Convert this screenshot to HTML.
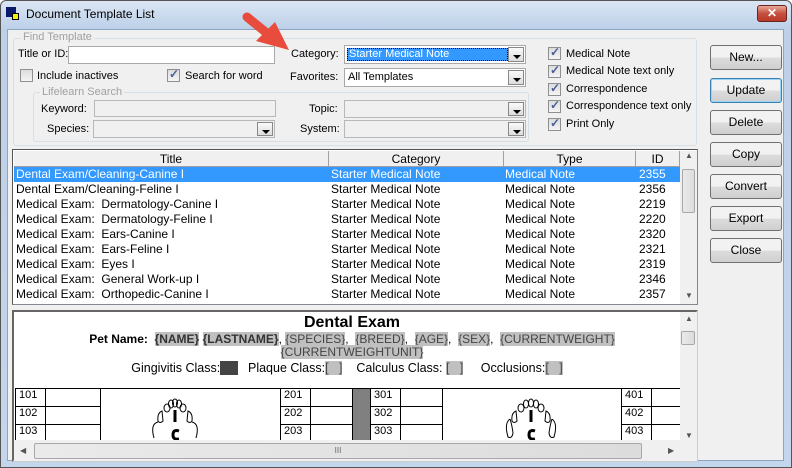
<!DOCTYPE html>
<html><head><meta charset="utf-8"><style>
*{box-sizing:border-box;margin:0;padding:0}
body{width:792px;height:468px;overflow:hidden;background:#fff;font-family:"Liberation Sans",sans-serif;font-size:11px;color:#000;position:relative}
.a{position:absolute;white-space:nowrap}
.win{left:0;top:0;width:792px;height:468px;background:linear-gradient(#dbe6f4,#bcd0e8 28px,#c4d6ec);border:1px solid #555;border-radius:6px 6px 0 0}
.body{left:7px;top:29px;width:777px;height:432px;background:#f0f0f0;border:1px solid #8ea4c0}
.grp{border:1px solid #d5dfe5;border-radius:3px}
.gl{background:#f0f0f0;color:#a0a0a0;padding:0 2px;font-size:11px}
.inp{background:#fff;border:1px solid #a9a9a9}
.dis{background:#f0f0f0;border:1px solid #b8b8b8}
.dd{position:absolute;right:1px;top:1px;width:16px;bottom:1px;background:linear-gradient(#fafafa,#dcdcdc);border:1px solid #888}
.dd:after{content:"";position:absolute;left:4px;top:7px;border-left:4px solid transparent;border-right:4px solid transparent;border-top:4px solid #000}
.cb{width:13px;height:13px;border:1px solid #8e8f8f;background:linear-gradient(#dcdcdc,#f4f4f4)}
.ck:after{content:"✓";position:absolute;left:1px;top:-3px;font-size:12px;color:#4a5f97;font-weight:bold}
.btn{width:72px;height:25px;border:1px solid #707070;border-radius:3px;background:linear-gradient(#f2f2f2 50%,#dddddd 50%,#cfcfcf);text-align:center;line-height:22px;font-size:12px}
.hd{top:151px;height:16px;background:#f0f0f0;border-right:1px solid #a0a0a0;border-bottom:1px solid #a0a0a0;text-align:center;line-height:16px;font-size:12px}
.row{height:15px;line-height:15px;font-size:12px}
.sb{background:#f0f0f0}
.thumb{background:linear-gradient(90deg,#eaeaea,#dcdcdc);border:1px solid #a8a8a8;border-radius:2px}
td{border:1px solid #000;height:18px;font-size:11px;padding-left:3px;vertical-align:top}
.g{background:#c0c0c0;color:#444}
</style></head><body>
<div class="a win"></div>
<div class="a" style="left:6px;top:7px;width:10px;height:10px;background:#0a1a6a"></div>
<div class="a" style="left:12px;top:13px;width:7px;height:7px;background:#f5f000;border:1px solid #000"></div>
<div class="a" style="left:26px;top:7px;font-size:12px">Document Template List</div>
<div class="a" style="left:757px;top:5px;width:30px;height:17px;border:1px solid #6b2420;border-radius:3px;background:linear-gradient(#e8a898,#c75040 50%,#b83828);color:#fff;font-weight:bold;text-align:center;line-height:15px;font-size:12px">✕</div>
<div class="a body"></div>

<div class="a grp" style="left:13px;top:38px;width:684px;height:108px"></div>
<div class="a gl" style="left:21px;top:31px">Find Template</div>
<div class="a" style="left:18px;top:48px">Title or ID:</div>
<div class="a inp" style="left:68px;top:46px;width:207px;height:18px"></div>
<div class="a cb" style="left:20px;top:69px"></div>
<div class="a" style="left:37px;top:70px">Include inactives</div>
<div class="a cb ck" style="left:167px;top:69px"></div>
<div class="a" style="left:185px;top:70px">Search for word</div>
<div class="a" style="left:291px;top:48px">Category:</div>
<div class="a inp" style="left:344px;top:45px;width:182px;height:19px"><div class="a" style="left:2px;top:2px;width:161px;height:13px;background:#3399ff;color:#fff;border:1px dotted #000;line-height:11px;padding-left:1px">Starter Medical Note</div><div class="dd"></div></div>
<div class="a" style="left:290px;top:71px">Favorites:</div>
<div class="a inp" style="left:344px;top:68px;width:182px;height:19px"><div class="a" style="left:3px;top:2px">All Templates</div><div class="dd"></div></div>

<div class="a grp" style="left:33px;top:92px;width:496px;height:50px"></div>
<div class="a gl" style="left:40px;top:86px">Lifelearn Search</div>
<div class="a" style="left:41px;top:103px">Keyword:</div>
<div class="a dis" style="left:94px;top:100px;width:182px;height:17px"></div>
<div class="a" style="left:47px;top:123px">Species:</div>
<div class="a dis" style="left:93px;top:120px;width:182px;height:18px"><div class="dd"></div></div>
<div class="a" style="left:309px;top:103px">Topic:</div>
<div class="a dis" style="left:344px;top:100px;width:182px;height:18px"><div class="dd"></div></div>
<div class="a" style="left:300px;top:123px">System:</div>
<div class="a dis" style="left:344px;top:120px;width:182px;height:18px"><div class="dd"></div></div>

<div class="a cb ck" style="left:548px;top:47px"></div><div class="a" style="left:566px;top:48px">Medical Note</div>
<div class="a cb ck" style="left:548px;top:65px"></div><div class="a" style="left:566px;top:65px">Medical Note text only</div>
<div class="a cb ck" style="left:548px;top:83px"></div><div class="a" style="left:566px;top:83px">Correspondence</div>
<div class="a cb ck" style="left:548px;top:100px"></div><div class="a" style="left:566px;top:100px">Correspondence text only</div>
<div class="a cb ck" style="left:548px;top:118px"></div><div class="a" style="left:566px;top:118px">Print Only</div>

<div class="a btn" style="left:710px;top:45px">New...</div>
<div class="a btn" style="left:710px;top:78px;border-color:#3c7fb1;box-shadow:inset 0 0 0 1px #9ad4f4">Update</div>
<div class="a btn" style="left:710px;top:110px">Delete</div>
<div class="a btn" style="left:710px;top:142px">Copy</div>
<div class="a btn" style="left:710px;top:174px">Convert</div>
<div class="a btn" style="left:710px;top:206px">Export</div>
<div class="a btn" style="left:710px;top:238px">Close</div>

<!-- list -->
<div class="a" style="left:12px;top:149px;width:686px;height:156px;background:#fff;border:1px solid #828790;border-top-color:#555;border-left-color:#555"></div>
<div class="a hd" style="left:14px;width:315px">Title</div>
<div class="a hd" style="left:329px;width:175px">Category</div>
<div class="a hd" style="left:504px;width:132px">Type</div>
<div class="a hd" style="left:636px;width:44px">ID</div>
<div class="a" style="left:14px;top:167px;width:666px;height:15px;background:#3399ff"></div>
<div class="a" style="left:16px;top:167px;line-height:15px;font-size:12px">
<div class="row" style="color:#fff">Dental Exam/Cleaning-Canine I</div>
<div class="row">Dental Exam/Cleaning-Feline I</div>
<div class="row">Medical Exam:&nbsp; Dermatology-Canine I</div>
<div class="row">Medical Exam:&nbsp; Dermatology-Feline I</div>
<div class="row">Medical Exam:&nbsp; Ears-Canine I</div>
<div class="row">Medical Exam:&nbsp; Ears-Feline I</div>
<div class="row">Medical Exam:&nbsp; Eyes I</div>
<div class="row">Medical Exam:&nbsp; General Work-up I</div>
<div class="row">Medical Exam:&nbsp; Orthopedic-Canine I</div></div>
<div class="a" style="left:331px;top:167px">
<div class="row" style="color:#fff">Starter Medical Note</div><div class="row">Starter Medical Note</div><div class="row">Starter Medical Note</div><div class="row">Starter Medical Note</div><div class="row">Starter Medical Note</div><div class="row">Starter Medical Note</div><div class="row">Starter Medical Note</div><div class="row">Starter Medical Note</div><div class="row">Starter Medical Note</div></div>
<div class="a" style="left:505px;top:167px">
<div class="row" style="color:#fff">Medical Note</div><div class="row">Medical Note</div><div class="row">Medical Note</div><div class="row">Medical Note</div><div class="row">Medical Note</div><div class="row">Medical Note</div><div class="row">Medical Note</div><div class="row">Medical Note</div><div class="row">Medical Note</div></div>
<div class="a" style="left:639px;top:167px">
<div class="row" style="color:#fff">2355</div><div class="row">2356</div><div class="row">2219</div><div class="row">2220</div><div class="row">2320</div><div class="row">2321</div><div class="row">2319</div><div class="row">2346</div><div class="row">2357</div></div>
<div class="a sb" style="left:680px;top:151px;width:17px;height:153px"></div>
<div class="a" style="left:685px;top:151px;font-size:8px;color:#555">▲</div>
<div class="a thumb" style="left:682px;top:169px;width:13px;height:44px"></div>
<div class="a" style="left:685px;top:291px;font-size:8px;color:#555">▼</div>

<!-- preview -->
<div class="a" style="left:12px;top:310px;width:686px;height:152px;background:#fff;border:2px solid #666;border-right-color:#ccc;border-bottom-color:#ccc"></div>
<div class="a" style="left:14px;top:313px;width:666px;text-align:center">
<div style="font-size:16px;font-weight:bold;margin-left:10px;line-height:20px">Dental Exam</div>
<div style="font-size:12px;line-height:13px;margin-left:10px"><b>Pet Name:&nbsp;&nbsp;<span class="g" style="color:#333">{NAME}</span> <span class="g" style="color:#333">{LASTNAME}</span></b>, <span class="g">{SPECIES}</span>, &nbsp;<span class="g">{BREED}</span>, &nbsp;<span class="g">{AGE}</span>, &nbsp;<span class="g">{SEX}</span>, &nbsp;<span class="g">{CURRENTWEIGHT}</span><br><span class="g">{CURRENTWEIGHTUNIT}</span></div>
<div style="font-size:12.5px;line-height:18px;margin-left:0px">Gingivitis Class:<span style="background:#444;color:#444">[&nbsp;&nbsp;&nbsp;]</span>&nbsp;&nbsp; Plaque Class:<span class="g">[&nbsp;&nbsp;&nbsp;]</span>&nbsp;&nbsp;&nbsp; Calculus Class: <span class="g">[&nbsp;&nbsp;&nbsp;]</span>&nbsp;&nbsp;&nbsp;&nbsp; Occlusions:<span class="g">[&nbsp;&nbsp;&nbsp;]</span></div>
</div>
<div class="a" style="left:15px;top:388px;width:665px;height:52px;overflow:hidden">
<table style="border-collapse:collapse;width:666px;table-layout:fixed">
<colgroup><col style="width:30px"><col style="width:55px"><col style="width:180px"><col style="width:30px"><col style="width:42px"><col style="width:18px"><col style="width:30px"><col style="width:42px"><col style="width:179px"><col style="width:30px"><col style="width:30px"></colgroup>
<tr><td>101</td><td></td><td rowspan="4" style="border-bottom:none"></td><td>201</td><td></td><td rowspan="4" style="background:#808080"></td><td>301</td><td></td><td rowspan="4"></td><td>401</td><td></td></tr>
<tr><td>102</td><td></td><td>202</td><td></td><td>302</td><td></td><td>402</td><td></td></tr>
<tr><td>103</td><td></td><td>203</td><td></td><td>303</td><td></td><td>403</td><td></td></tr>
<tr><td>104</td><td></td><td>204</td><td></td><td>304</td><td></td><td>404</td><td></td></tr>
</table></div>
<svg class="a" style="left:140px;top:395px" width="70" height="46" viewBox="0 0 70 46" fill="none" stroke="#000" stroke-width="1">
<ellipse cx="35" cy="8" rx="2.5" ry="4"/><ellipse cx="31" cy="9" rx="2.5" ry="4"/><ellipse cx="39" cy="9" rx="2.5" ry="4"/><ellipse cx="27" cy="13" rx="3" ry="4"/><ellipse cx="43" cy="13" rx="3" ry="4"/>
<path d="M22 16 q-5 2 -4 10 q2 3 5 0 z M48 16 q5 2 4 10 q-2 3 -5 0 z M18 27 q-8 2 -4 16 M52 27 q8 2 4 16"/>
<path d="M35 15 v12" stroke-width="3"/><path d="M39 36 q-6 -2 -6 4 q0 5 6 4" stroke-width="3"/></svg>
<svg class="a" style="left:496px;top:395px" width="70" height="46" viewBox="0 0 70 46" fill="none" stroke="#000" stroke-width="1">
<ellipse cx="35" cy="8" rx="2.5" ry="4"/><ellipse cx="30" cy="9" rx="2.5" ry="4"/><ellipse cx="40" cy="9" rx="2.5" ry="4"/><ellipse cx="25" cy="13" rx="3" ry="4"/><ellipse cx="45" cy="13" rx="3" ry="4"/>
<path d="M20 16 q-5 2 -4 10 q2 3 5 0 z M50 16 q5 2 4 10 q-2 3 -5 0 z M14 24 q-6 4 -2 18 q4 2 5 -4 q-1 -8 -3 -14 M56 24 q6 4 2 18 q-4 2 -5 -4 q1 -8 3 -14"/>
<path d="M35 15 v12" stroke-width="3"/><path d="M39 36 q-6 -2 -6 4 q0 5 6 4" stroke-width="3"/></svg>
<div class="a sb" style="left:680px;top:312px;width:17px;height:128px"></div>
<div class="a" style="left:685px;top:314px;font-size:8px;color:#555">▲</div>
<div class="a thumb" style="left:681px;top:331px;width:14px;height:14px"></div>
<div class="a" style="left:685px;top:431px;font-size:8px;color:#555">▼</div>
<div class="a sb" style="left:14px;top:440px;width:683px;height:21px"></div>
<div class="a" style="left:20px;top:446px;font-size:8px;color:#555">◀</div>
<div class="a thumb" style="left:34px;top:443px;width:608px;height:16px;text-align:center;font-size:8px;line-height:14px;color:#666">III</div>
<div class="a" style="left:668px;top:446px;font-size:8px;color:#555">▶</div>

<svg class="a" style="left:230px;top:5px" width="70" height="55" viewBox="230 5 70 55">
<path d="M247 17 L268 34" stroke="#e74c3c" stroke-width="9" stroke-linecap="round"/>
<polygon points="275,22 289,50 256,41" fill="#e74c3c"/></svg>
</body></html>
